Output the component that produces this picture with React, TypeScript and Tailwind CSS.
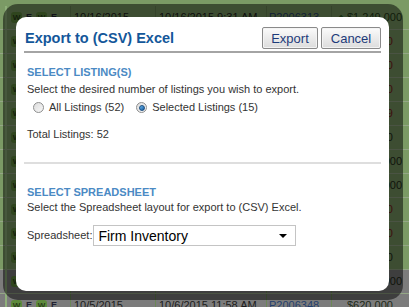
import React from "react";

type Row = { date: string; listed: string; id: string; price: string; tone: "up" | "down" | "flat"; shade: "green" | "gray" };

const rows: Row[] = [
  { date: "10/16/2015", listed: "10/16/2015 9:31 AM", id: "P2006313", price: "$1,249,000", tone: "up", shade: "green" },
  { date: "10/15/2015", listed: "10/15/2015 4:12 PM", id: "P2006298", price: "$549,000", tone: "down", shade: "green" },
  { date: "10/14/2015", listed: "10/14/2015 2:05 PM", id: "P2006281", price: "$415,000", tone: "down", shade: "green" },
  { date: "10/13/2015", listed: "10/13/2015 10:47 AM", id: "P2006270", price: "$389,900", tone: "down", shade: "green" },
  { date: "10/12/2015", listed: "10/12/2015 1:18 PM", id: "P2006264", price: "$489,999", tone: "down", shade: "green" },
  { date: "10/10/2015", listed: "10/10/2015 9:02 AM", id: "P2006259", price: "$725,000", tone: "flat", shade: "green" },
  { date: "10/9/2015", listed: "10/9/2015 3:40 PM", id: "P2006251", price: "$1,150,000", tone: "flat", shade: "green" },
  { date: "10/8/2015", listed: "10/8/2015 11:26 AM", id: "P2006247", price: "$2,395,000", tone: "flat", shade: "green" },
  { date: "10/8/2015", listed: "10/8/2015 8:55 AM", id: "P2006240", price: "$659,000", tone: "down", shade: "green" },
  { date: "10/7/2015", listed: "10/7/2015 5:10 PM", id: "P2006233", price: "$579,000", tone: "down", shade: "green" },
  { date: "10/7/2015", listed: "10/7/2015 12:31 PM", id: "P2006229", price: "$845,000", tone: "flat", shade: "green" },
  { date: "10/6/2015", listed: "10/6/2015 2:44 PM", id: "P2006352", price: "$1,075,000", tone: "flat", shade: "gray" },
  { date: "10/5/2015", listed: "10/6/2015 11:58 AM", id: "P2006348", price: "$620,000", tone: "flat", shade: "gray" },
];

function Badge() {
  return (
    <span className="flex h-[11px] w-[11px] items-center justify-center rounded-[3px] bg-[#5e8a3c] text-[8px] font-bold leading-none text-[#2a3f1a]">
      W
    </span>
  );
}

function TableRow({ row }: { row: Row }) {
  const bg = row.shade === "green" ? "bg-[#7b9a65]" : "bg-[#7c7c7c]";
  const priceColor = row.tone === "down" ? "text-[#7a1a1a]" : row.tone === "up" ? "text-[#1f3a16]" : "text-[#1e2a18]";
  return (
    <div className={`flex h-6 border-b border-[#94a786] text-[11px] leading-[13px] text-[#1c1c1c] ${bg}`}>
      <div className="flex w-[71px] items-center gap-[4px] border-r border-[#6b8757] pl-[5px]">
        <span className="h-full w-[2px] bg-[#8fb07a]" />
        <Badge />
        <span className="text-[9px] font-bold text-[#223]">E</span>
        <Badge />
        <span className="text-[9px] font-bold text-[#223]">E</span>
      </div>
      <div className="flex w-[85px] items-center border-r border-[#6b8757] pl-[3px]">{row.date}</div>
      <div className="flex w-[111px] items-center border-r border-[#6b8757] pl-[3px]">{row.listed}</div>
      <div className="flex w-[65px] items-center border-r border-[#6b8757] pl-[2px] text-[#24406e]">{row.id}</div>
      <div className={`flex flex-1 items-center gap-[3px] pl-[6px] ${priceColor}`}>
        <span className={`text-[8px] ${row.tone === "up" ? "text-[#2b5a1c]" : "text-transparent"}`}>◆</span>
        {row.price}
      </div>
    </div>
  );
}

function Radio({ checked }: { checked?: boolean }) {
  return (
    <span className="flex h-[11px] w-[11px] items-center justify-center rounded-full border border-[#8e8f8f] bg-gradient-to-br from-[#dcdcdc] to-[#f8f8f8]">
      {checked && <span className="h-[6px] w-[6px] rounded-full border border-[#1b4e80] bg-gradient-to-br from-[#6ab8f0] to-[#145a9e]" />}
    </span>
  );
}

function Button({ children, w }: { children: React.ReactNode; w: string }) {
  return (
    <button
      className={`h-[22px] ${w} rounded-[2px] border border-[#8a8a8a] bg-gradient-to-b from-[#fbfbfb] to-[#dcdcdc] text-[13px] leading-none text-[#1d3b7a] shadow-[inset_0_0_0_1px_#f4f4f4]`}
    >
      {children}
    </button>
  );
}

export default function App() {
  return (
    <div className="relative h-[307px] w-[409px] overflow-hidden bg-[#7b9a65] font-['Liberation_Sans',Arial,sans-serif]">
      <div className="flex flex-col pt-[6px]">
        {rows.map((r, i) => (
          <TableRow key={i} row={r} />
        ))}
      </div>

      {/* modal frame */}
      <div className="absolute left-[3px] top-[4px] flex h-[296px] w-[400px] rounded-[15px] bg-black/50 pb-[9px] pl-[13px] pr-[14px] pt-[13px]">
        <div className="flex flex-1 flex-col rounded-[10px] bg-white px-[8px] pt-[10px] text-[11px] leading-[13px] text-[#333]">
          <div className="flex items-center justify-between border-b-2 border-[#a4a4a4] pb-[2px] pl-[1px]">
            <h1 className="text-[14.5px] font-bold leading-[18px] text-[#13579a]">Export to (CSV) Excel</h1>
            <div className="flex gap-[3px]">
              <Button w="w-[56px]">Export</Button>
              <Button w="w-[60px]">Cancel</Button>
            </div>
          </div>

          <div className="flex flex-col pl-[3px] pt-[13px]">
            <div className="text-[11px] font-bold text-[#4b8ac4]">SELECT LISTING(S)</div>
            <div className="mt-[4px]">Select the desired number of listings you wish to export.</div>
            <div className="mt-[5px] flex items-center pl-[6px]">
              <Radio />
              <span className="ml-[5px]">All Listings (52)</span>
              <span className="ml-[12px]">
                <Radio checked />
              </span>
              <span className="ml-[5px]">Selected Listings (15)</span>
            </div>
            <div className="mt-[14px]">Total Listings: 52</div>
          </div>

          <div className="mt-[21px] border-b-2 border-[#dedede]" />

          <div className="flex flex-col pl-[3px] pt-[22px]">
            <div className="text-[11px] font-bold text-[#4b8ac4]">SELECT SPREADSHEET</div>
            <div className="mt-[2px]">Select the Spreadsheet layout for export to (CSV) Excel.</div>
            <div className="mt-[11px] flex items-center gap-[1px]">
              <span>Spreadsheet:</span>
              <div className="flex h-[21px] w-[203px] items-center justify-between border border-[#c4c4c4] bg-white pl-[4px] pr-[8px] text-[14px] leading-[16px] text-black">
                <span>Firm Inventory</span>
                <span className="h-0 w-0 border-l-[4px] border-r-[4px] border-t-[4px] border-l-transparent border-r-transparent border-t-black" />
              </div>
            </div>
          </div>
        </div>
      </div>
    </div>
  );
}
